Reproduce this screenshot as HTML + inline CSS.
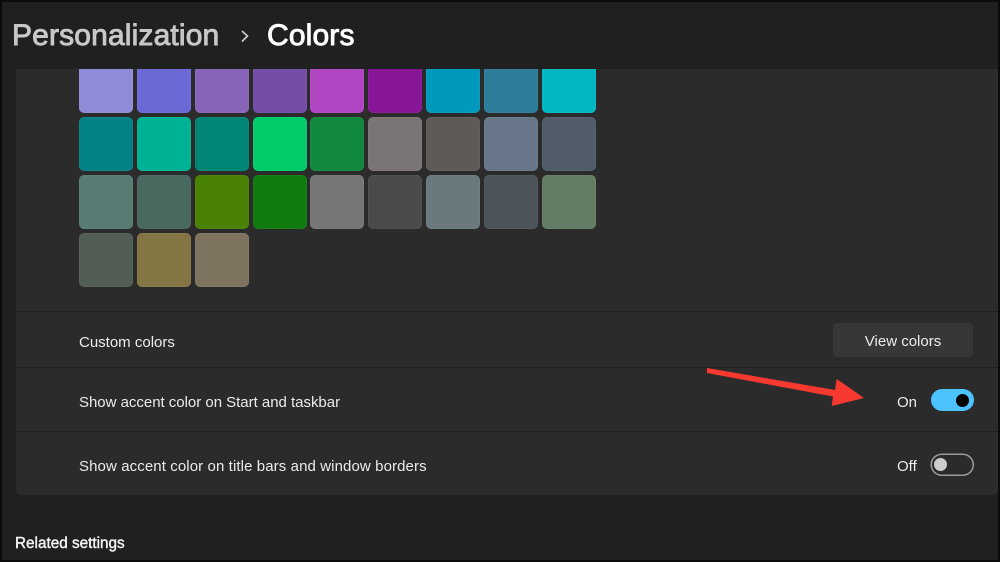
<!DOCTYPE html>
<html><head><meta charset="utf-8"><style>
html,body{margin:0;padding:0;background:#202020}
#r{position:relative;width:1000px;height:562px;overflow:hidden;background:#202020;font-family:"Liberation Sans",sans-serif;color:#ececec}
#r div,#r span{position:absolute}
.t{white-space:nowrap;line-height:20px;font-size:15px}
.s{width:54px;height:54px;border-radius:5px;box-sizing:border-box;border:1px solid rgba(255,255,255,.04)}
.l{left:16px;width:984px;height:1px;background:#1f1f1f}
.h{font-size:30px;line-height:36px;-webkit-text-stroke:.9px currentColor;letter-spacing:.15px}
</style></head><body><div id="r">
<div style="left:16px;top:69px;width:982px;height:426px;background:#2b2b2b;border-radius:0 0 5px 5px"></div>
<div class="l" style="top:311px"></div><div class="l" style="top:367px"></div><div class="l" style="top:431px"></div>

<div class="s" style="left:79px;top:59px;background:#8e8cd8"></div>
<div class="s" style="left:137px;top:59px;background:#6b69d6"></div>
<div class="s" style="left:195px;top:59px;background:#8764b8"></div>
<div class="s" style="left:253px;top:59px;background:#744da9"></div>
<div class="s" style="left:310px;top:59px;background:#b146c2"></div>
<div class="s" style="left:368px;top:59px;background:#881798"></div>
<div class="s" style="left:426px;top:59px;background:#0099bc"></div>
<div class="s" style="left:484px;top:59px;background:#2d7d9a"></div>
<div class="s" style="left:542px;top:59px;background:#00b7c3"></div>
<div style="left:60px;top:40px;width:560px;height:29px;background:#202020"></div>

<div class="s" style="left:79px;top:117px;background:#038387"></div>
<div class="s" style="left:137px;top:117px;background:#00b294"></div>
<div class="s" style="left:195px;top:117px;background:#018574"></div>
<div class="s" style="left:253px;top:117px;background:#00cc6a"></div>
<div class="s" style="left:310px;top:117px;background:#10893e"></div>
<div class="s" style="left:368px;top:117px;background:#7a7574"></div>
<div class="s" style="left:426px;top:117px;background:#5d5a58"></div>
<div class="s" style="left:484px;top:117px;background:#68768a"></div>
<div class="s" style="left:542px;top:117px;background:#515c6b"></div>

<div class="s" style="left:79px;top:175px;background:#567c73"></div>
<div class="s" style="left:137px;top:175px;background:#486860"></div>
<div class="s" style="left:195px;top:175px;background:#498205"></div>
<div class="s" style="left:253px;top:175px;background:#107c10"></div>
<div class="s" style="left:310px;top:175px;background:#767676"></div>
<div class="s" style="left:368px;top:175px;background:#4c4a48"></div>
<div class="s" style="left:426px;top:175px;background:#69797e"></div>
<div class="s" style="left:484px;top:175px;background:#4a5459"></div>
<div class="s" style="left:542px;top:175px;background:#647c64"></div>

<div class="s" style="left:79px;top:233px;background:#525e54"></div>
<div class="s" style="left:137px;top:233px;background:#847545"></div>
<div class="s" style="left:195px;top:233px;background:#7e735f"></div>

<div class="t h" style="left:12px;top:18px;color:#c8c8c8">Personalization</div>
<svg style="position:absolute;left:238px;top:28px" width="14" height="18"><path d="M4 3L9.5 8L4 13.5" fill="none" stroke="#cfcfcf" stroke-width="1.6"/></svg>
<div class="t h" style="left:267px;top:18px;color:#fff">Colors</div>

<div class="t" style="left:79px;top:333px">Custom colors</div>
<div class="t" style="left:79px;top:393px;letter-spacing:-.02px">Show accent color on Start and taskbar</div>
<div class="t" style="left:79px;top:457px;letter-spacing:.1px">Show accent color on title bars and window borders</div>
<div class="t" style="left:15px;top:534px;font-size:15.3px;color:#f5f5f5;-webkit-text-stroke:.4px currentColor">Related settings</div>

<div style="left:833px;top:323px;width:140px;height:34px;background:#373737;border-radius:4px"></div>
<div class="t" style="left:833px;top:332px;width:140px;text-align:center">View colors</div>

<div class="t" style="left:897px;top:393px">On</div>
<div style="left:931px;top:389px;width:43px;height:22px;border-radius:11px;background:#4cc2ff"></div>
<div style="left:956px;top:393.5px;width:13px;height:13px;border-radius:50%;background:#000"></div>

<div class="t" style="left:897px;top:457px">Off</div>
<svg style="position:absolute;left:930px;top:453px" width="45" height="24"><rect x="1.25" y="1.25" width="42" height="21" rx="10.5" fill="none" stroke="#9a9a9a" stroke-width="1.5"/></svg>
<div style="left:934px;top:458px;width:13px;height:13px;border-radius:50%;background:#cdcdcd"></div>

<svg style="position:absolute;left:700px;top:360px" width="170" height="50"><path d="M7 8L135 30L136.7 19L164 38L131.7 46L133 36.5L7 13Z" fill="#f8392f"/></svg>

<div style="left:0;top:0;width:996px;height:558px;border:2px solid #0c0c0c"></div>
</div></body></html>
